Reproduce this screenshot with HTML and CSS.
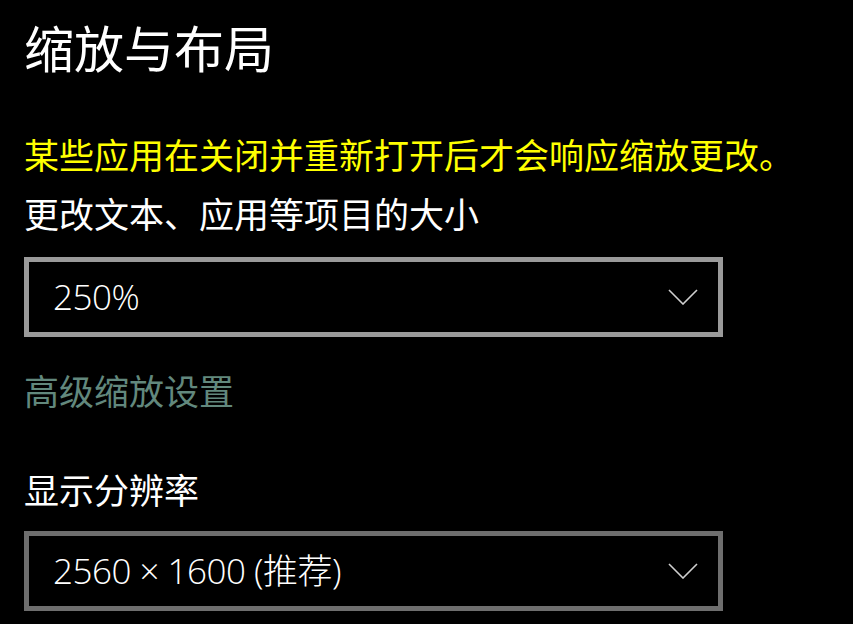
FILE: index.html
```html
<!DOCTYPE html>
<html lang="zh-CN">

<head>
  <meta charset="UTF-8">
  <meta name="viewport" content="width=device-width, initial-scale=1.0">
  <title>缩放与布局</title>
  <link rel="stylesheet" href="styles.css">
</head>

<body>

  <h1 class="page-title">缩放与布局</h1>

  <p class="notice">某些应用在关闭并重新打开后才会响应缩放更改。</p>
  <p class="label">更改文本、应用等项目的大小</p>

  <!-- Scale picker (focused) -->
  <div class="combo combo-active">
    <span class="combo-value">250%</span>
    <svg class="chevron" width="30" height="16" viewBox="0 0 30 16">
      <polyline points="1,1 15,15 29,1" fill="none" stroke="#cfcfcf" stroke-width="1.6" />
    </svg>
  </div>

  <a class="link" href="#">高级缩放设置</a>

  <p class="label label-gap">显示分辨率</p>

  <!-- Resolution picker -->
  <div class="combo">
    <span class="combo-value">2560 × 1600 (推荐)</span>
    <svg class="chevron" width="30" height="16" viewBox="0 0 30 16">
      <polyline points="1,1 15,15 29,1" fill="none" stroke="#cfcfcf" stroke-width="1.6" />
    </svg>
  </div>

</body>

</html>
```

FILE: styles.css
```css
body {
  font-family: 'Noto Sans CJK SC', sans-serif;
  background-color: #000;
  color: #fff;
  margin: 0;
  padding: 16px 0 0 24px;
  height: 100vh;
  box-sizing: border-box;
  overflow: hidden;
}

.page-title {
  font-size: 50px;
  font-weight: normal;
  line-height: 60px;
  margin: 0;
}

.notice,
.label {
  font-size: 35px;
  line-height: 48px;
  margin: 0;
  white-space: nowrap;
}

.notice {
  color: #ffff00;
  margin-top: 54px;
}

.label {
  margin-top: 11px;
}

.label-gap {
  margin-top: 51px;
}

.combo {
  width: 699px;
  height: 80px;
  box-sizing: border-box;
  border: 5px solid #6e6e6e;
  display: flex;
  align-items: center;
  justify-content: space-between;
  padding: 0 20px 0 24px;
  margin-top: 18px;
}

.combo-active {
  border-color: #9a9a9a;
  margin-top: 20px;
}

.combo-value {
  font-family: 'Open Sans', 'Noto Sans CJK SC', sans-serif;
  font-size: 35px;
  font-weight: 300;
  letter-spacing: -0.5px;
  line-height: 48px;
}

.chevron {
  display: block;
}

.link {
  display: block;
  color: #62887d;
  text-decoration: none;
  font-size: 35px;
  line-height: 48px;
  margin-top: 29px;
}
```
